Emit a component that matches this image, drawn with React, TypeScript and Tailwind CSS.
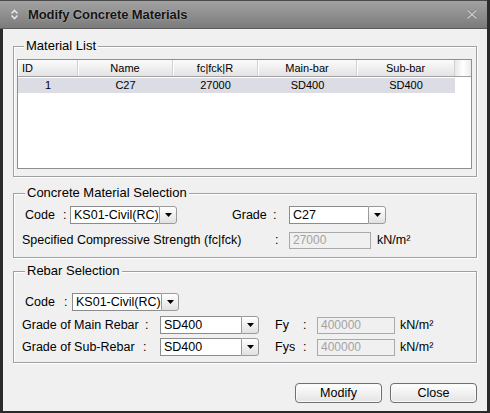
import React from "react";

const columns = [
  { key: "id", title: "ID", width: "w-[60px]", head: "justify-start pl-[4px]" },
  { key: "name", title: "Name", width: "w-[95px]", head: "justify-center" },
  { key: "fc", title: "fc|fck|R", width: "w-[85px]", head: "justify-center" },
  { key: "main", title: "Main-bar", width: "w-[99px]", head: "justify-center" },
  { key: "sub", title: "Sub-bar", width: "w-[98px]", head: "justify-center" },
];

const rows = [{ id: "1", name: "C27", fc: "27000", main: "SD400", sub: "SD400" }];

// combo box: white edit part + rounded drop button
const Combo = ({ value, className }: { value: string; className: string }) => (
  <div className={`flex h-[18px] shrink-0 ${className}`}>
    <div className="min-w-0 flex-1 overflow-hidden whitespace-nowrap border border-r-0 border-[#8c8c8c] bg-white pl-[3px] text-[12.5px] leading-[16px] text-black">
      {value}
    </div>
    <div className="flex w-[18px] shrink-0 items-center justify-center rounded-r-[3px] border border-[#9b9b9b] bg-linear-to-b from-white to-[#e1e1e1]">
      <svg width="7" height="4" viewBox="0 0 7 4">
        <path d="M0 0H7L3.5 4Z" fill="#000" />
      </svg>
    </div>
  </div>
);

const ReadOnly = ({ value, className }: { value: string; className: string }) => (
  <div
    className={`h-[17px] shrink-0 border border-[#a9a9a9] bg-[#f0f0f0] pl-[3px] text-[12px] leading-[15px] text-[#a3a3a3] ${className}`}
  >
    {value}
  </div>
);

const Button = ({ label }: { label: string }) => (
  <button className="h-[20px] w-[87px] rounded-[4px] border border-[#6f6f6f] bg-linear-to-b from-white to-[#e3e3e3] text-[12.5px] leading-[18px] text-black shadow-[inset_0_0_0_1px_#fafafa]">
    {label}
  </button>
);

const groupCls =
  "mx-[10px] border border-[#a0a0a0] shadow-[inset_1px_1px_0_#ffffff,1px_1px_0_#ffffff]";

const rowCls = "flex h-[18px] items-center text-[12.5px] leading-[16px]";

export default function App() {
  return (
    <div className="flex h-[413px] w-[490px] flex-col bg-[#2b2b2b] pr-[3px] pb-[2px] font-['Liberation_Sans',Arial,sans-serif]">
      {/* title bar */}
      <div className="flex h-[29px] shrink-0 items-center border-t border-b border-t-[#4a4a4a] border-b-[#5c5c5c] bg-linear-to-b from-[#a2a2a2] via-[#8f8f8f] to-[#7b7b7b] pl-[10px] pr-[9px]">
        <svg width="9" height="11" viewBox="0 0 9 11">
          <path d="M1.5 4.5L4.5 1.5L7.5 4.5" fill="none" stroke="#e4e4e4" strokeWidth="1.6" />
          <path d="M1.5 6.5L4.5 9.5L7.5 6.5" fill="none" stroke="#e4e4e4" strokeWidth="1.6" />
        </svg>
        <span className="ml-[9px] text-[13px] font-bold tracking-[-0.1px] text-[#141414] [text-shadow:0_0_2px_rgba(255,255,255,0.45)]">
          Modify Concrete Materials
        </span>
        <div className="flex-1" />
        <svg width="12" height="11" viewBox="0 0 12 11" className="mb-[1px]">
          <path d="M1.5 1.5L10.5 9.5M10.5 1.5L1.5 9.5" stroke="#7a7a7a" strokeWidth="2.4" />
          <path d="M1.5 1.5L10.5 9.5M10.5 1.5L1.5 9.5" stroke="#cfcfcf" strokeWidth="1.3" />
        </svg>
      </div>

      {/* dialog body */}
      <div className="ml-[3px] flex flex-1 flex-col bg-[#f0f0f0] text-black">
        {/* Material List */}
        <fieldset className={`${groupCls} mt-[9px] pl-[3px] pr-[3px] pb-[7px]`}>
          <legend className="ml-[7px] bg-[#f0f0f0] px-[2px] text-[13px] leading-[16px]">Material List</legend>
          <div className="mt-[5px] h-[110px] w-[455px] border border-[#8e8e8e] bg-white">
            <div className="flex h-[17px] border-b border-[#a2a2a2]">
              {columns.map((c) => (
                <div
                  key={c.key}
                  className={`flex items-center border-r border-[#d2d2d2] bg-linear-to-b from-[#fbfbfb] to-[#e3e3e3] text-[11px] leading-[16px] shadow-[inset_1px_0_0_#ffffff] ${c.width} ${c.head}`}
                >
                  {c.title}
                </div>
              ))}
              <div className="flex-1 bg-linear-to-r from-[#e8e8e8] via-white to-[#ececec]" />
            </div>
            {rows.map((r) => (
              <div key={r.id} className="mt-[1px] flex h-[15px] w-[437px] bg-[#dcdce4] text-[11px] leading-[15px]">
                <div className="w-[60px] text-center">{r.id}</div>
                <div className="w-[95px] text-center">{r.name}</div>
                <div className="w-[85px] text-center">{r.fc}</div>
                <div className="w-[99px] text-center">{r.main}</div>
                <div className="w-[98px] text-center">{r.sub}</div>
              </div>
            ))}
          </div>
        </fieldset>

        {/* Concrete Material Selection */}
        <fieldset className={`${groupCls} mt-[8px] pl-[8px] pb-[8px]`}>
          <legend className="ml-[3px] bg-[#f0f0f0] px-[2px] text-[13px] leading-[16px]">Concrete Material Selection</legend>
          <div className={`${rowCls} mt-[5px]`}>
            <span className="ml-[3px] w-[38px]">Code</span>
            <span className="w-[7px]">:</span>
            <Combo value="KS01-Civil(RC)" className="w-[107px]" />
            <span className="ml-[55px] w-[41px]">Grade</span>
            <span className="w-[16px]">:</span>
            <Combo value="C27" className="w-[97px]" />
          </div>
          <div className={`${rowCls} mt-[7px]`}>
            <span className="w-[253px] whitespace-nowrap">Specified Compressive Strength (fc|fck)</span>
            <span className="w-[14px]">:</span>
            <ReadOnly value="27000" className="w-[82px]" />
            <span className="ml-[6px]">kN/m²</span>
          </div>
        </fieldset>

        {/* Rebar Selection */}
        <fieldset className={`${groupCls} mt-[5px] pl-[8px] pb-[6px]`}>
          <legend className="ml-[3px] bg-[#f0f0f0] px-[2px] text-[13px] leading-[16px]">Rebar Selection</legend>
          <div className={`${rowCls} mt-[14px]`}>
            <span className="ml-[3px] w-[39px]">Code</span>
            <span className="w-[8px]">:</span>
            <Combo value="KS01-Civil(RC)" className="w-[107px]" />
          </div>
          <div className={`${rowCls} mt-[5px]`}>
            <span className="w-[123px] whitespace-nowrap">Grade of Main Rebar</span>
            <span className="w-[15px]">:</span>
            <Combo value="SD400" className="w-[99px]" />
            <span className="ml-[16px] w-[28px]">Fy</span>
            <span className="w-[14px]">:</span>
            <ReadOnly value="400000" className="w-[78px]" />
            <span className="ml-[5px]">kN/m²</span>
          </div>
          <div className={`${rowCls} mt-[4px]`}>
            <span className="w-[121px] whitespace-nowrap">Grade of Sub-Rebar</span>
            <span className="w-[17px]">:</span>
            <Combo value="SD400" className="w-[99px]" />
            <span className="ml-[16px] w-[28px]">Fys</span>
            <span className="w-[14px]">:</span>
            <ReadOnly value="400000" className="w-[78px]" />
            <span className="ml-[5px]">kN/m²</span>
          </div>
        </fieldset>

        {/* buttons */}
        <div className="mt-[20px] flex justify-end gap-[8px] pr-[10px]">
          <Button label="Modify" />
          <Button label="Close" />
        </div>
      </div>
    </div>
  );
}
